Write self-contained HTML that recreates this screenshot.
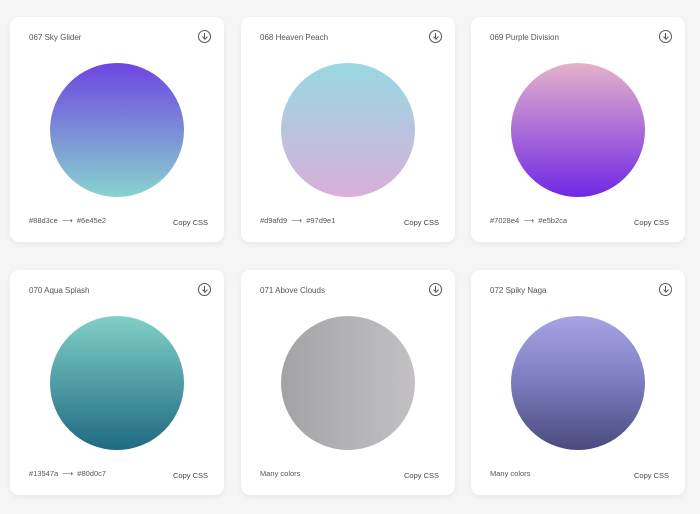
<!DOCTYPE html>
<html><head><style>
body{margin:0;width:700px;height:514px;background:#f5f5f5;font-family:"Liberation Sans",sans-serif;position:relative;overflow:hidden}
.c{position:absolute;width:214px;height:225px;background:#fff;border-radius:9px;box-shadow:0 2px 6px rgba(0,0,0,.06)}
.t{position:absolute;left:19px;top:16px;font-size:8px;color:#555}
.i{position:absolute;left:188px;top:13px;width:11px;height:11px;border:1px solid #555;border-radius:50%}
.i:after{content:"";position:absolute;left:5px;top:2px;width:1px;height:5px;background:#555}
.i:before{content:"";position:absolute;left:3.5px;top:4px;width:3px;height:3px;border-right:1px solid #555;border-bottom:1px solid #555;transform:rotate(45deg)}
.o{position:absolute;left:40px;top:46px;width:134px;height:134px;border-radius:50%}
.f{position:absolute;left:19px;top:199px;font-size:7.5px;color:#555}
.p{position:absolute;right:16px;top:201px;font-size:7.5px;color:#444}
</style></head><body>
<div class="c" style="left:10px;top:17px"><div class="t">067 Sky Glider</div><div class="i"></div><div class="o" style="background:linear-gradient(#6e45e2,#88d3ce)"></div><div class="f">#88d3ce &nbsp;⟶&nbsp; #6e45e2</div><div class="p">Copy CSS</div></div>
<div class="c" style="left:241px;top:17px"><div class="t">068 Heaven Peach</div><div class="i"></div><div class="o" style="background:linear-gradient(#97d9e1,#d9afd9)"></div><div class="f">#d9afd9 &nbsp;⟶&nbsp; #97d9e1</div><div class="p">Copy CSS</div></div>
<div class="c" style="left:471px;top:17px"><div class="t">069 Purple Division</div><div class="i"></div><div class="o" style="background:linear-gradient(#e5b2ca,#7028e4)"></div><div class="f">#7028e4 &nbsp;⟶&nbsp; #e5b2ca</div><div class="p">Copy CSS</div></div>
<div class="c" style="left:10px;top:270px"><div class="t">070 Aqua Splash</div><div class="i"></div><div class="o" style="background:linear-gradient(#80d0c7,#1f6a82)"></div><div class="f">#13547a &nbsp;⟶&nbsp; #80d0c7</div><div class="p">Copy CSS</div></div>
<div class="c" style="left:241px;top:270px"><div class="t">071 Above Clouds</div><div class="i"></div><div class="o" style="background:linear-gradient(90deg,#a3a3a6,#c2c0c2)"></div><div class="f">Many colors</div><div class="p">Copy CSS</div></div>
<div class="c" style="left:471px;top:270px"><div class="t">072 Spiky Naga</div><div class="i"></div><div class="o" style="background:linear-gradient(#a8a4e4,#7a7cbf 50%,#4a4a7c)"></div><div class="f">Many colors</div><div class="p">Copy CSS</div></div>
</body></html>
